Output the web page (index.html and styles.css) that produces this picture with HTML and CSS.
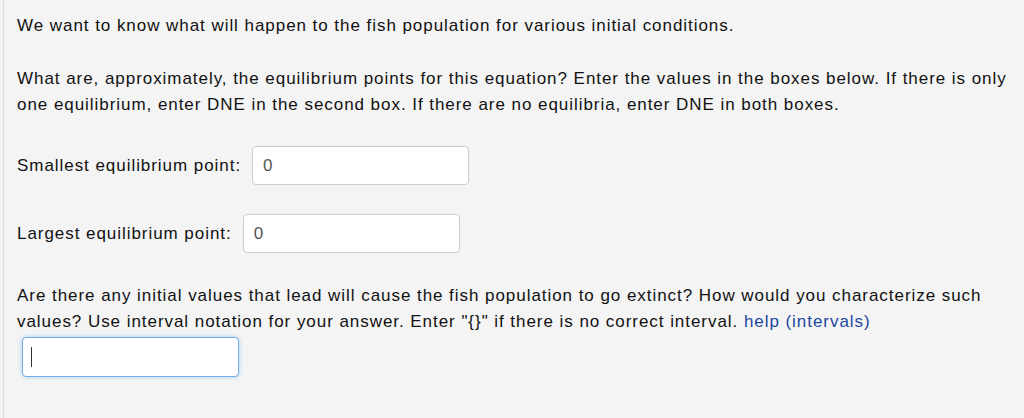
FILE: index.html
```html
<!DOCTYPE html>
<html>
<head>
<meta charset="utf-8">
<link rel="stylesheet" href="styles.css">
</head>
<body>
<div class="problem">
  <p class="para para-first">We want to know what will happen to the fish population for various initial conditions.</p>
  <p class="para">What are, approximately, the equilibrium points for this equation? Enter the values in the boxes below. If there is only one equilibrium, enter DNE in the second box. If there are no equilibria, enter DNE in both boxes.</p>
  <div class="row row-first">
    <span class="label">Smallest equilibrium point:</span>
    <span class="field">0</span>
  </div>
  <div class="row row-second">
    <span class="label">Largest equilibrium point:</span>
    <span class="field">0</span>
  </div>
  <p class="para para-last">Are there any initial values that lead will cause the fish population to go extinct? How would you characterize such values? Use interval notation for your answer. Enter "{}" if there is no correct interval. <a class="help" href="#">help (intervals)</a></p>
  <div class="field field-focused"><span class="caret"></span></div>
</div>
</body>
</html>
```

FILE: styles.css
```css
html, body {
  margin: 0;
  padding: 0;
  background: #f4f4f4;
}
body {
  height: 418px;
  overflow: hidden;
}
.problem {
  margin-left: 3px;
  border-left: 1px solid #dcdcdc;
  padding: 13px 0 0 13px;
  height: 418px;
  box-sizing: border-box;
  font-family: "Liberation Sans", Arial, Helvetica, sans-serif;
  font-size: 17px;
  letter-spacing: 0.95px;
  line-height: 26px;
  color: #111;
}
.para {
  margin: 0 0 28px 0;
  padding-right: 8px;
}
.para-first {
  margin-bottom: 27px;
}
.row {
  display: flex;
  align-items: center;
  gap: 11px;
}
.row-first {
  margin-top: 2px;
}
.row-second {
  margin-top: 29px;
}
.para-last {
  margin: 30px 0 2px 0;
}
.label {
  line-height: 26px;
}
.field {
  display: flex;
  align-items: center;
  box-sizing: border-box;
  width: 217px;
  height: 39px;
  padding-left: 10px;
  background: #fff;
  border: 1px solid #cccccc;
  border-radius: 4px;
  color: #555;
  font-size: 17px;
}
.field-focused {
  margin-left: 5px;
  height: 40px;
  border-color: #74aee8;
  box-shadow: 0 0 4px rgba(102, 175, 233, 0.55);
  padding-left: 8px;
}
.caret {
  display: inline-block;
  width: 1px;
  height: 20px;
  background: #333;
}
.help {
  color: #1c47a0;
  text-decoration: none;
}
```
